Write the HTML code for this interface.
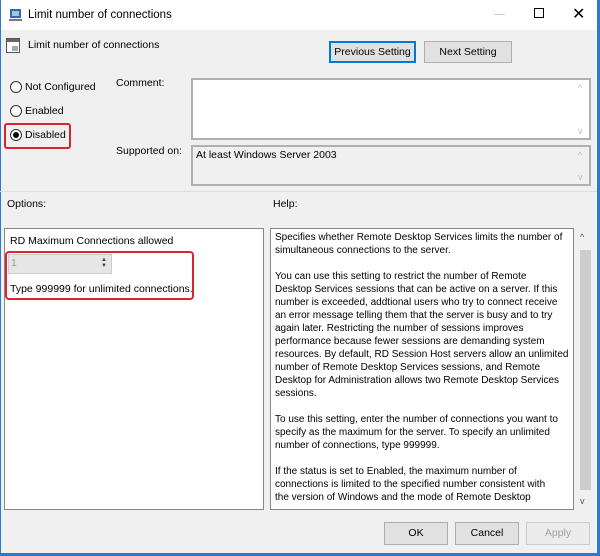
<!DOCTYPE html><html><head><style>
*{margin:0;padding:0;box-sizing:border-box}
body{width:600px;height:556px;background:#f0f0f0;font-family:"Liberation Sans",sans-serif;font-size:10.5px;color:#000;position:relative;overflow:hidden}
.a{position:absolute;white-space:nowrap}
.btn{position:absolute;background:#e1e1e1;border:1px solid #adadad;text-align:center;line-height:20px}
.box{position:absolute;border:1px solid #a0a0a0;background:#fff}
.rad{position:absolute;width:12px;height:12px;border:1px solid #333;border-radius:50%;background:#fff}
</style></head><body>
<div class="a" style="left:0;top:0;width:600px;height:30px;background:#fff"></div>
<div class="a" style="left:0;top:0;width:1px;height:556px;background:#2b79d0"></div>
<div class="a" style="left:597px;top:0;width:3px;height:556px;background:#2b79d0"></div>
<div class="a" style="left:0;top:553px;width:600px;height:3px;background:#2b79d0"></div>
<svg class="a" style="left:9px;top:8px" width="14" height="14"><rect x="1" y="1" width="11" height="9" fill="#3a64b0"/><rect x="3" y="3" width="7" height="5" fill="#9cc"/><rect x="0" y="11" width="13" height="2" fill="#777"/></svg>
<div class="a" style="left:28px;top:9px;font-size:11.5px">Limit number of connections</div>
<div class="a" style="left:494px;top:14px;width:11px;height:1px;background:#ccc"></div>
<div class="a" style="left:534px;top:8px;width:10px;height:10px;border:1px solid #000"></div>
<div class="a" style="left:572px;top:4px;font-size:16px">✕</div>
<svg class="a" style="left:6px;top:38px" width="14" height="15"><rect x="0.5" y="0.5" width="13" height="14" fill="#fff" stroke="#555"/><rect x="1" y="1" width="12" height="3" fill="#666"/><rect x="6" y="8" width="6" height="5" fill="#9ab"/></svg>
<div class="a" style="left:28px;top:39px">Limit number of connections</div>
<div class="btn" style="left:329px;top:41px;width:87px;height:22px;border:1px solid #0078d7;box-shadow:inset 0 0 0 1px #0078d7">Previous Setting</div>
<div class="btn" style="left:424px;top:41px;width:88px;height:22px">Next Setting</div>
<div class="rad" style="left:10px;top:81px"></div><div class="a" style="left:25px;top:81px">Not Configured</div>
<div class="rad" style="left:10px;top:105px"></div><div class="a" style="left:25px;top:105px">Enabled</div>
<div class="rad" style="left:10px;top:129px"></div><div class="a" style="left:13px;top:132px;width:6px;height:6px;border-radius:50%;background:#000"></div><div class="a" style="left:25px;top:129px">Disabled</div>
<div class="a" style="left:4px;top:123px;width:67px;height:26px;border:2px solid #d8262c;border-radius:3px"></div>
<div class="a" style="left:116px;top:77px">Comment:</div>
<div class="box" style="left:191px;top:78px;width:400px;height:62px;border:2px solid #b0b0b0"></div>
<div class="a" style="left:578px;top:83px;color:#bbb;font-size:9px">^</div><div class="a" style="left:578px;top:126px;color:#bbb;font-size:9px">v</div>
<div class="a" style="left:116px;top:145px">Supported on:</div>
<div class="box" style="left:191px;top:145px;width:400px;height:41px;background:#f0f0f0;border:2px solid #b0b0b0"></div>
<div class="a" style="left:196px;top:149px">At least Windows Server 2003</div>
<div class="a" style="left:578px;top:150px;color:#bbb;font-size:9px">^</div><div class="a" style="left:578px;top:172px;color:#bbb;font-size:9px">v</div>
<div class="a" style="left:0;top:191px;width:597px;height:1px;background:#ddd"></div>
<div class="a" style="left:7px;top:198px">Options:</div>
<div class="a" style="left:273px;top:198px">Help:</div>
<div class="box" style="left:4px;top:228px;width:260px;height:282px;border-color:#888"></div>
<div class="a" style="left:10px;top:235px">RD Maximum Connections allowed</div>
<div class="a" style="left:8px;top:254px;width:104px;height:20px;background:#e6e6e6;border:1px solid #ccc"></div>
<div class="a" style="left:11px;top:257px;color:#999">1</div>
<div class="a" style="left:101px;top:257px;font-size:6px;color:#444;line-height:6px">▲<br>▼</div>
<div class="a" style="left:10px;top:283px">Type 999999 for unlimited connections.</div>
<div class="a" style="left:5px;top:251px;width:189px;height:49px;border:2px solid #d8262c;border-radius:4px"></div>
<div class="box" style="left:270px;top:228px;width:304px;height:282px;border-color:#888"></div>
<div class="a" style="left:576px;top:230px;width:16px;height:280px;background:#f0f0f0"></div>
<div class="a" style="left:580px;top:250px;width:11px;height:240px;background:#cdcdcd"></div>
<div class="a" style="left:580px;top:232px;font-size:9px;color:#555">^</div><div class="a" style="left:580px;top:496px;font-size:9px;color:#555">v</div>
<div class="a" style="left:275px;top:231px;line-height:13px;white-space:pre;font-size:10px">Specifies whether Remote Desktop Services limits the number of
simultaneous connections to the server.

You can use this setting to restrict the number of Remote
Desktop Services sessions that can be active on a server. If this
number is exceeded, addtional users who try to connect receive
an error message telling them that the server is busy and to try
again later. Restricting the number of sessions improves
performance because fewer sessions are demanding system
resources. By default, RD Session Host servers allow an unlimited
number of Remote Desktop Services sessions, and Remote
Desktop for Administration allows two Remote Desktop Services
sessions.

To use this setting, enter the number of connections you want to
specify as the maximum for the server. To specify an unlimited
number of connections, type 999999.

If the status is set to Enabled, the maximum number of
connections is limited to the specified number consistent with
the version of Windows and the mode of Remote Desktop</div>
<div class="btn" style="left:384px;top:522px;width:64px;height:23px">OK</div>
<div class="btn" style="left:455px;top:522px;width:64px;height:23px">Cancel</div>
<div class="btn" style="left:526px;top:522px;width:64px;height:23px;color:#a0a0a0;background:#ececec;border-color:#ccc">Apply</div>
</body></html>
